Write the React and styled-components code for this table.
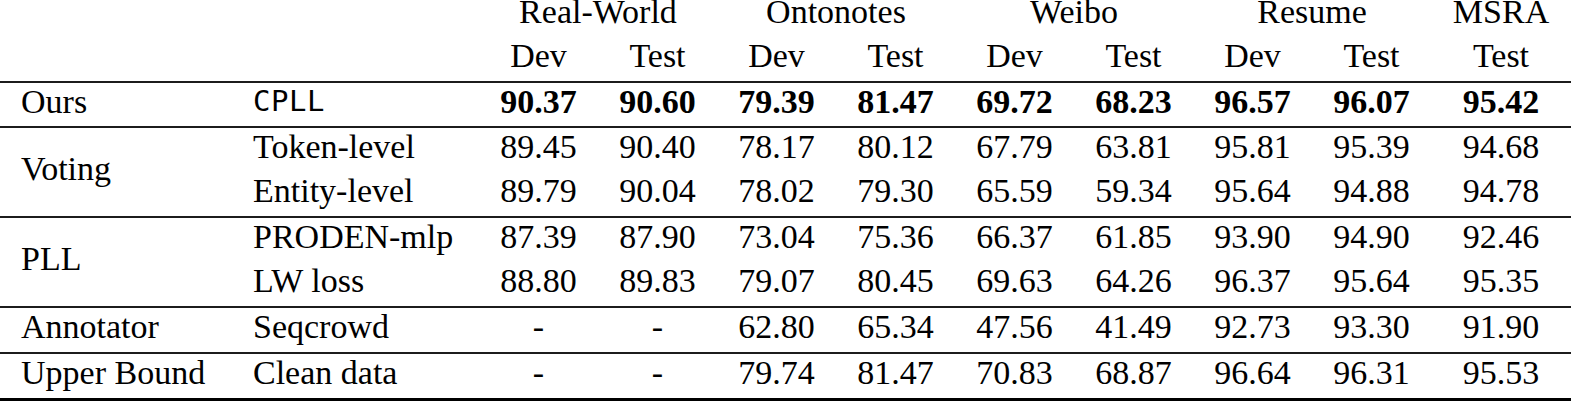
import { createGlobalStyle, styled } from "styled-components";

const GlobalStyle = createGlobalStyle`
  html, body {
    margin: 0;
    padding: 0;
    background: #ffffff;
  }
`;

const COLUMNS = "232px 247px repeat(8, 119px) 140px";

const StyledTable = styled.div`
  width: 1571px;
  font-family: "Liberation Serif", "Times New Roman", serif;
  font-size: 34px;
  color: #000;
`;

const Head = styled.div`
  display: grid;
  grid-template-columns: ${COLUMNS};
  grid-template-rows: 36px 45px;
  border-bottom: 2px solid #1c1c1c;
`;

const Group = styled.div`
  display: grid;
  grid-template-columns: ${COLUMNS};
  grid-auto-rows: ${(p) => p.$rowHeight || 44}px;
  border-bottom: ${(p) => (p.$last ? "3px solid #000" : "2px solid #1c1c1c")};
`;

const Cell = styled.div`
  display: flex;
  align-items: center;
  justify-content: ${(p) => (p.$left ? "flex-start" : "center")};
  padding: 0 0 ${(p) => p.$pb ?? 6}px ${(p) => (p.$left ? 21 : 0)}px;
  line-height: 1;
  white-space: nowrap;
  font-weight: ${(p) => (p.$bold ? 700 : 400)};
  grid-column: span ${(p) => p.$span || 1};
  grid-row: span ${(p) => p.$rows || 1};
`;

// top header row: the table's top rule sits just above the visible area
const DatasetCell = styled(Cell)`
  align-items: flex-start;
  padding: 0;
  line-height: 24px;
`;

const Mono = styled.span`
  font-family: "DejaVu Sans Mono", monospace;
  font-size: 29px;
  letter-spacing: 0.5px;
`;

const datasets = [
  { name: "Real-World", splits: ["Dev", "Test"] },
  { name: "Ontonotes", splits: ["Dev", "Test"] },
  { name: "Weibo", splits: ["Dev", "Test"] },
  { name: "Resume", splits: ["Dev", "Test"] },
  { name: "MSRA", splits: ["Test"] },
];

const groups = [
  {
    label: "Voting",
    rows: [
      ["Token-level", "89.45", "90.40", "78.17", "80.12", "67.79", "63.81", "95.81", "95.39", "94.68"],
      ["Entity-level", "89.79", "90.04", "78.02", "79.30", "65.59", "59.34", "95.64", "94.88", "94.78"],
    ],
  },
  {
    label: "PLL",
    rows: [
      ["PRODEN-mlp", "87.39", "87.90", "73.04", "75.36", "66.37", "61.85", "93.90", "94.90", "92.46"],
      ["LW loss", "88.80", "89.83", "79.07", "80.45", "69.63", "64.26", "96.37", "95.64", "95.35"],
    ],
  },
  {
    label: "Annotator",
    rows: [["Seqcrowd", "-", "-", "62.80", "65.34", "47.56", "41.49", "92.73", "93.30", "91.90"]],
  },
  {
    label: "Upper Bound",
    rows: [["Clean data", "-", "-", "79.74", "81.47", "70.83", "68.87", "96.64", "96.31", "95.53"]],
  },
];

const ours = ["90.37", "90.60", "79.39", "81.47", "69.72", "68.23", "96.57", "96.07", "95.42"];

const App = () => {
  return (
    <>
      <GlobalStyle />
      <StyledTable>
        <Head>
          <DatasetCell $span={2} />
          {datasets.map((d) => (
            <DatasetCell key={d.name} $span={d.splits.length}>
              {d.name}
            </DatasetCell>
          ))}
          <Cell $span={2} $pb={5} />
          {datasets.flatMap((d) =>
            d.splits.map((s) => (
              <Cell key={d.name + s} $pb={5}>
                {s}
              </Cell>
            ))
          )}
        </Head>

        <Group $rowHeight={43}>
          <Cell $left>Ours</Cell>
          <Cell $left>
            <Mono>CPLL</Mono>
          </Cell>
          {ours.map((v, i) => (
            <Cell key={i} $bold>
              {v}
            </Cell>
          ))}
        </Group>

        {groups.map((g, gi) => (
          <Group key={g.label} $last={gi === groups.length - 1}>
            <Cell $left $rows={g.rows.length}>
              {g.label}
            </Cell>
            {g.rows.map((row) =>
              row.map((v, i) => (
                <Cell key={row[0] + i} $left={i === 0}>
                  {v}
                </Cell>
              ))
            )}
          </Group>
        ))}
      </StyledTable>
    </>
  );
};

export default App;
